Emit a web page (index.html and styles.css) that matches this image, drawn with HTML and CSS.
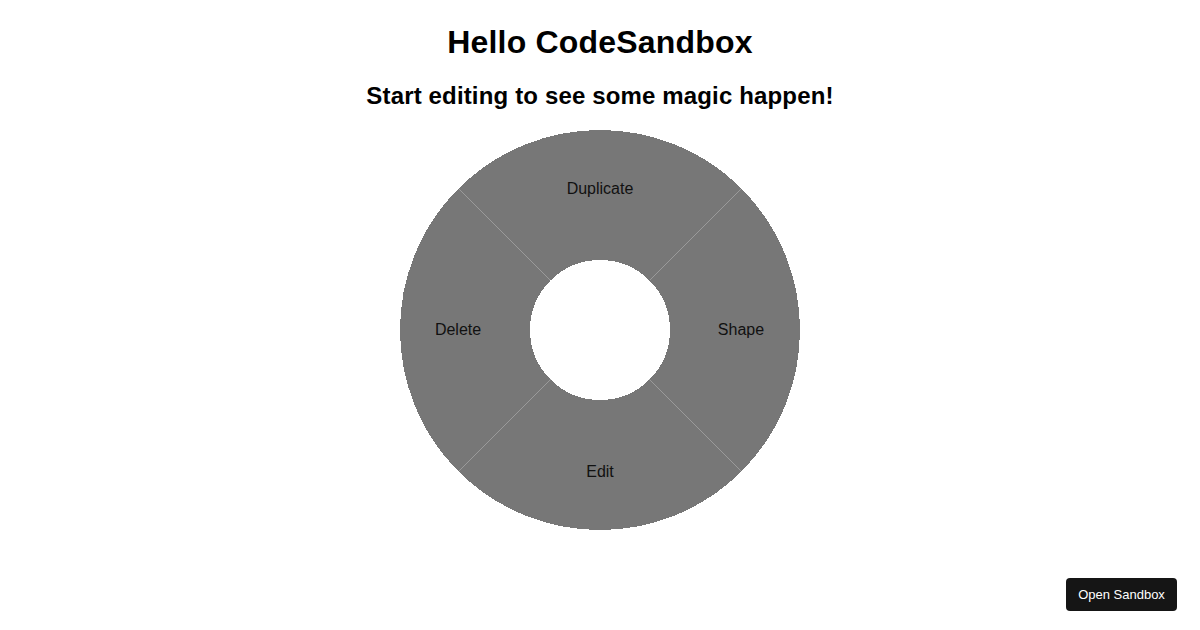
FILE: index.html
```html
<!DOCTYPE html>
<html>
<head>
<meta charset="utf-8">
<link rel="stylesheet" href="styles.css">
</head>
<body>
<div class="app">
  <h1>Hello CodeSandbox</h1>
  <h2>Start editing to see some magic happen!</h2>
  <div class="menu">
    <svg class="donut" width="400" height="400" viewBox="0 0 400 400">
      <circle cx="200" cy="200" r="135" fill="none" stroke="#777777" stroke-width="130"/>
      <g stroke="#9a9a9a" stroke-width="1">
        <line x1="150.5" y1="150.5" x2="58.6" y2="58.6"/>
        <line x1="249.5" y1="150.5" x2="341.4" y2="58.6"/>
        <line x1="150.5" y1="249.5" x2="58.6" y2="341.4"/>
        <line x1="249.5" y1="249.5" x2="341.4" y2="341.4"/>
      </g>
      <g class="labels">
        <text x="200" y="64">Duplicate</text>
        <text x="58" y="205">Delete</text>
        <text x="341" y="205">Shape</text>
        <text x="200" y="347">Edit</text>
      </g>
    </svg>
  </div>
</div>
<button class="open-btn">Open Sandbox</button>
</body>
</html>
```

FILE: styles.css
```css
body {
  font-family: "Liberation Sans", Arial, sans-serif;
  background: #ffffff;
  color: #000000;
}
.app {
  text-align: center;
}
h1 {
  font-size: 32px;
  font-weight: bold;
  margin: 15.5px 0 21.44px;
  letter-spacing: 0.2px;
}
h2 {
  font-size: 24px;
  font-weight: bold;
  letter-spacing: 0.15px;
}
.menu {
  display: flex;
  justify-content: center;
  margin-top: 3px;
}
.donut {
  display: block;
  shape-rendering: crispEdges;
}
.labels text {
  font-family: "Liberation Sans", Arial, sans-serif;
  font-size: 16px;
  fill: #111111;
  text-anchor: middle;
}
.open-btn {
  position: fixed;
  right: 23px;
  bottom: 19px;
  width: 111px;
  height: 33px;
  background: #151515;
  color: #ffffff;
  border: none;
  border-radius: 4px;
  font-family: "Liberation Sans", Arial, sans-serif;
  font-size: 13px;
  padding: 0;
}
```
